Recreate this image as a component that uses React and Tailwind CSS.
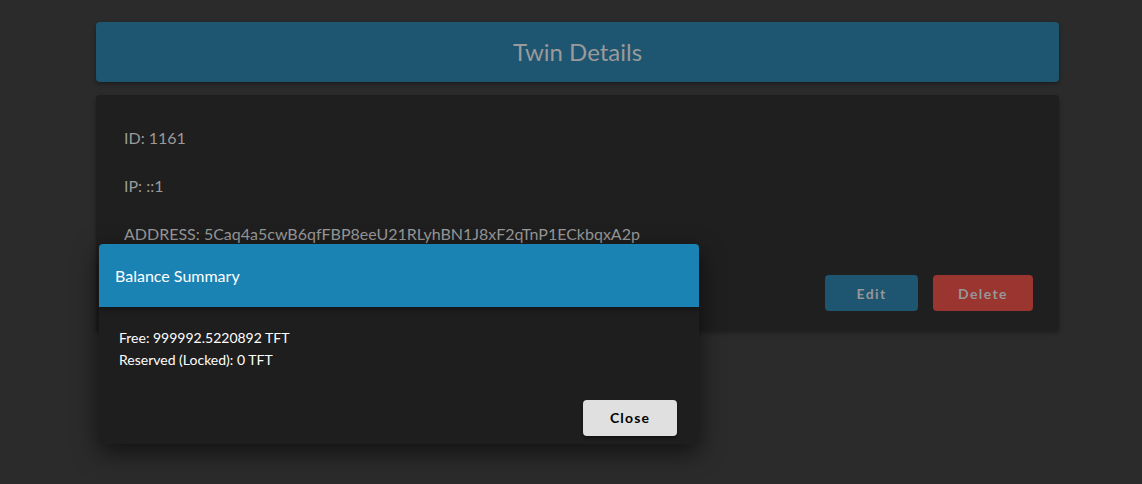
import React from "react";

const font = { fontFamily: "Lato, 'Noto Sans', sans-serif" };

function BalanceDialog() {
  return (
    <div className="absolute left-[99px] top-[244px] w-[600px] h-[200px] flex flex-col rounded-[4px] bg-[#1e1e1e] shadow-[0_8px_24px_rgba(0,0,0,0.6)] overflow-hidden">
      <div className="h-[63px] flex items-center px-4 bg-[#1a83b4] shadow-[0_2px_6px_rgba(0,0,0,0.4)]">
        <span className="text-[16px] text-white">Balance Summary</span>
      </div>
      <div className="flex-1 flex flex-col px-5 pt-[20px] text-[14px] leading-[22px] text-white">
        <p>Free: 999992.5220892 TFT</p>
        <p>Reserved (Locked): 0 TFT</p>
        <div className="mt-auto mb-2 flex justify-end pr-[2px]">
          <button className="w-[94px] h-[36px] rounded-[4px] bg-[#e0e0e0] text-black text-[14px] font-bold tracking-[0.08em] shadow-[0_2px_3px_rgba(0,0,0,0.4)]">
            Close
          </button>
        </div>
      </div>
    </div>
  );
}

export default function App() {
  return (
    <div className="relative w-full h-[484px] bg-[#2b2b2b] overflow-hidden" style={font}>
      <div className="ml-[96px] w-[963px] pt-[22px] flex flex-col gap-[13px]">
        <div className="h-[60px] flex items-center justify-center rounded-[4px] bg-[#1e5570] shadow-[0_2px_4px_rgba(0,0,0,0.35)]">
          <h1 className="text-[24px] text-[#9a9a9a]">Twin Details</h1>
        </div>
        <div className="h-[236px] flex flex-col rounded-[4px] bg-[#1f1f1f] pl-7 pr-[26px] pt-[31px] pb-[20px] shadow-[0_2px_4px_rgba(0,0,0,0.3)]">
          <div className="flex flex-col gap-[24px] text-[16px] leading-[24px] text-[#9a9a9a]">
            <p>ID: 1161</p>
            <p>IP: ::1</p>
            <p>ADDRESS: 5Caq4a5cwB6qfFBP8eeU21RLyhBN1J8xF2qTnP1ECkbqxA2p</p>
          </div>
          <div className="mt-auto flex justify-end gap-[15px]">
            <button className="w-[93px] h-[36px] rounded-[4px] bg-[#1e5570] text-[#979797] text-[14px] font-bold tracking-[0.1em]">
              Edit
            </button>
            <button className="w-[100px] h-[36px] rounded-[4px] bg-[#9a352f] text-[#979797] text-[14px] font-bold tracking-[0.1em]">
              Delete
            </button>
          </div>
        </div>
      </div>
      <BalanceDialog />
    </div>
  );
}
